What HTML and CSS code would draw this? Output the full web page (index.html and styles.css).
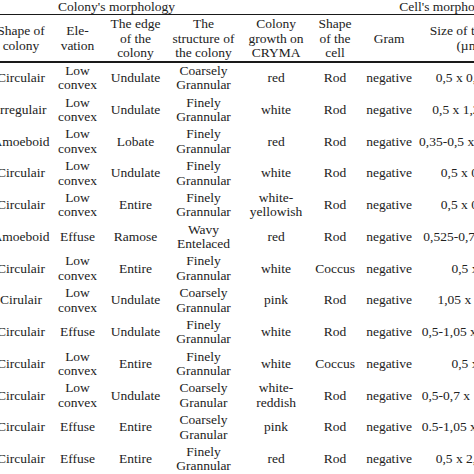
FILE: index.html
```html
<!DOCTYPE html>
<html lang="en">
<head>
<meta charset="utf-8">
<title>Colony and cell morphology</title>
<link rel="stylesheet" href="styles.css">
</head>
<body>
<table class="morph">
  <colgroup>
    <col class="c1"><col class="c2"><col class="c3"><col class="c4"><col class="c5"><col class="c6"><col class="c7"><col class="c8"><col class="c9">
  </colgroup>
  <thead>
    <tr class="group">
      <th colspan="4">Colony's morphology</th>
      <th></th>
      <th colspan="4">Cell's morphology</th>
    </tr>
    <tr class="heads">
      <th>Shape of<br>colony</th>
      <th>Ele-<br>vation</th>
      <th>The edge<br>of the<br>colony</th>
      <th>The<br>structure of<br>the colony</th>
      <th>Colony<br>growth on<br>CRYMA</th>
      <th>Shape<br>of the<br>cell</th>
      <th>Gram</th>
      <th class="size">Size of the cell<br>(µm)</th>
      <th></th>
    </tr>
  </thead>
  <tbody>
    <tr><td>Circulair</td><td>Low<br>convex</td><td>Undulate</td><td>Coarsely<br>Grannular</td><td>red</td><td>Rod</td><td>negative</td><td class="size">0,5 x 0,8-1,2</td><td></td></tr>
    <tr><td>Irregulair</td><td>Low<br>convex</td><td>Undulate</td><td>Finely<br>Grannular</td><td>white</td><td>Rod</td><td>negative</td><td class="size">0,5 x 1,25-1,5</td><td></td></tr>
    <tr><td>Amoeboid</td><td>Low<br>convex</td><td>Lobate</td><td>Finely<br>Grannular</td><td>red</td><td>Rod</td><td>negative</td><td class="size">0,35-0,5 x 0,7-1,05</td><td></td></tr>
    <tr><td>Circulair</td><td>Low<br>convex</td><td>Undulate</td><td>Finely<br>Grannular</td><td>white</td><td>Rod</td><td>negative</td><td class="size">0,5 x 0,8-1</td><td></td></tr>
    <tr><td>Circulair</td><td>Low<br>convex</td><td>Entire</td><td>Finely<br>Grannular</td><td>white-<br>yellowish</td><td>Rod</td><td>negative</td><td class="size">0,5 x 0,7-1</td><td></td></tr>
    <tr><td>Amoeboid</td><td>Effuse</td><td>Ramose</td><td>Wavy<br>Entelaced</td><td>red</td><td>Rod</td><td>negative</td><td class="size">0,525-0,7 x 1-1,4</td><td></td></tr>
    <tr><td>Circulair</td><td>Low<br>convex</td><td>Entire</td><td>Finely<br>Grannular</td><td>white</td><td>Coccus</td><td>negative</td><td class="size">0,5 x 1</td><td></td></tr>
    <tr><td>Cirulair</td><td>Low<br>convex</td><td>Undulate</td><td>Coarsely<br>Grannular</td><td>pink</td><td>Rod</td><td>negative</td><td class="size">1,05 x 2-2,5</td><td></td></tr>
    <tr><td>Circulair</td><td>Effuse</td><td>Undulate</td><td>Finely<br>Grannular</td><td>white</td><td>Rod</td><td>negative</td><td class="size">0,5-1,05 x 2,1-2,5</td><td></td></tr>
    <tr><td>Circulair</td><td>Low<br>convex</td><td>Entire</td><td>Finely<br>Grannular</td><td>white</td><td>Coccus</td><td>negative</td><td class="size">0,5 x 1</td><td></td></tr>
    <tr><td>Circulair</td><td>Low<br>convex</td><td>Undulate</td><td>Coarsely<br>Granular</td><td>white-<br>reddish</td><td>Rod</td><td>negative</td><td class="size">0,5-0,7 x 1,05-2,1</td><td></td></tr>
    <tr><td>Circulair</td><td>Effuse</td><td>Entire</td><td>Coarsely<br>Granular</td><td>pink</td><td>Rod</td><td>negative</td><td class="size">0.5-1,05 x 2,1-2,5</td><td></td></tr>
    <tr><td>Circulair</td><td>Effuse</td><td>Entire</td><td>Finely<br>Grannular</td><td>red</td><td>Rod</td><td>negative</td><td class="size">0,5 x 2,1-2,5</td><td></td></tr>
  </tbody>
</table>
</body>
</html>
```

FILE: styles.css
```css
html, body {
  margin: 0;
  padding: 0;
  overflow: hidden;
  background: #ffffff;
}

body {
  width: 474px;
  height: 474px;
  font-family: "Liberation Serif", "Times New Roman", serif;
  font-size: 13.5px;
  color: #222222;
}

.morph {
  table-layout: fixed;
  border-collapse: collapse;
  border-spacing: 0;
  width: 595px;
  margin-left: -8px;
}

.c1 { width: 58px; }
.c2 { width: 55px; }
.c3 { width: 61px; }
.c4 { width: 75px; }
.c5 { width: 70px; }
.c6 { width: 48px; }
.c7 { width: 60px; }
.c8 { width: 110px; }
.c9 { width: 58px; }

.morph th,
.morph td {
  padding: 0;
  text-align: center;
  vertical-align: middle;
  white-space: nowrap;
  font-weight: normal;
  line-height: 14.5px;
  overflow: visible;
}

.group th {
  height: 14px;
  line-height: 14px;
  border-bottom: 1.6px solid #1a1a1a;
}

.heads th {
  height: 43px;
  padding-top: 2px;
  border-bottom: 2px solid #1a1a1a;
}

.morph tbody td {
  height: 31.75px;
}

.morph .size {
  padding-right: 8px;
}
```
